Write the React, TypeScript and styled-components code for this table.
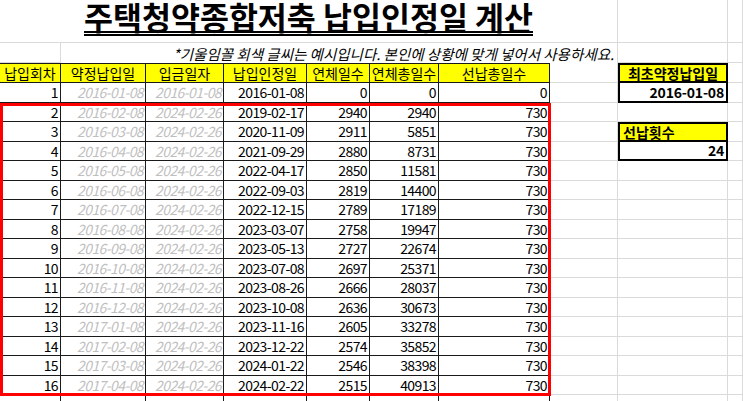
import React from "react";
import styled, { createGlobalStyle } from "styled-components";

const Global = createGlobalStyle`
  html, body { margin: 0; padding: 0; background: #ffffff; overflow: hidden; }
  body { font-family: "Noto Sans CJK KR", "Noto Sans", sans-serif; }
`;

const GRID = "#dadada";
const LINE = "#1a1a1a";

const Sheet = styled.div`
  position: relative;
  display: grid;
  grid-template-columns: 61px 85px 78px 83px 63px 69px 111px 68px 110px 15px;
  grid-template-rows: 43px 20px 20px repeat(17, 19.5px);
  width: 743px;
  height: 401px;
  overflow: hidden;
  font-family: "Noto Sans CJK KR", sans-serif;
  color: #000;
`;

const GridCell = styled.div`
  box-sizing: border-box;
  border-right: 1px solid ${GRID};
  border-bottom: 1px solid ${GRID};
`;

const TitleCell = styled.div`
  grid-column: 1 / span 8;
  box-sizing: border-box;
  border-bottom: 1px solid ${GRID};
  border-right: 1px solid ${GRID};
  display: flex;
  justify-content: center;
  align-items: flex-start;
  padding-top: 2px;
`;

const Title = styled.span`
  display: inline-block;
  font-size: 31.5px;
  font-weight: 700;
  line-height: 29px;
  border-bottom: 5px double #000;
  white-space: nowrap;
`;

const NoteCell = styled.div`
  grid-column: 2 / span 7;
  box-sizing: border-box;
  border-right: 1px solid ${GRID};
  display: flex;
  justify-content: flex-end;
  align-items: center;
  padding-right: 3px;
  font-size: 14.5px;
  font-style: italic;
  white-space: nowrap;
`;

const HeadCell = styled.div`
  box-sizing: border-box;
  background: #ffff00;
  border-top: 1px solid ${LINE};
  border-right: 1px solid ${LINE};
  border-bottom: 1px solid ${LINE};
  display: flex;
  align-items: center;
  justify-content: center;
  font-size: 14px;
  white-space: nowrap;
`;

const DataCell = styled.div<{ $example?: boolean }>`
  box-sizing: border-box;
  border-right: 1px solid ${LINE};
  border-bottom: 1px solid ${LINE};
  display: flex;
  align-items: center;
  justify-content: flex-end;
  padding-right: 2px;
  font-size: 14px;
  letter-spacing: -0.6px;
  white-space: nowrap;
  color: ${(p) => (p.$example ? "#bfbfbf" : "#000")};
  font-style: ${(p) => (p.$example ? "italic" : "normal")};
`;

const BoxHead = styled.div<{ $left?: boolean }>`
  box-sizing: border-box;
  background: #ffff00;
  border: 2px solid #000;
  display: flex;
  align-items: center;
  justify-content: ${(p) => (p.$left ? "flex-start" : "center")};
  padding-left: ${(p) => (p.$left ? "3px" : "0")};
  font-size: 14px;
  font-weight: 700;
  white-space: nowrap;
`;

const BoxValue = styled.div`
  box-sizing: border-box;
  border: 2px solid #000;
  border-top: none;
  display: flex;
  align-items: center;
  justify-content: flex-end;
  padding-right: 2px;
  font-size: 14px;
  letter-spacing: -0.2px;
  font-weight: 700;
  white-space: nowrap;
`;

const RedFrame = styled.div`
  position: absolute;
  left: 0;
  top: 103px;
  width: 551px;
  height: 293px;
  box-sizing: border-box;
  border: 3px solid #ff0000;
  pointer-events: none;
`;

const headers = ["납입회차", "약정납입일", "입금일자", "납입인정일", "연체일수", "연체총일수", "선납총일수"];

const recognized = [
  "2016-01-08", "2019-02-17", "2020-11-09", "2021-09-29", "2022-04-17", "2022-09-03",
  "2022-12-15", "2023-03-07", "2023-05-13", "2023-07-08", "2023-08-26", "2023-10-08",
  "2023-11-16", "2023-12-22", "2024-01-22", "2024-02-22",
];
const overdue = [0, 2940, 2911, 2880, 2850, 2819, 2789, 2758, 2727, 2697, 2666, 2636, 2605, 2574, 2546, 2515];
const overdueTotal = [0, 2940, 5851, 8731, 11581, 14400, 17189, 19947, 22674, 25371, 28037, 30673, 33278, 35852, 38398, 40913];

type Row = { n: number; due: string; paid: string; rec: string; od: number; odt: number; pre: number };

const rows: Row[] = recognized.map((rec, i) => {
  const y = 2016 + Math.floor(i / 12);
  const mo = (i % 12) + 1;
  const due = `${y}-${String(mo).padStart(2, "0")}-08`;
  return {
    n: i + 1,
    due,
    paid: i === 0 ? "2016-01-08" : "2024-02-26",
    rec,
    od: overdue[i],
    odt: overdueTotal[i],
    pre: i === 0 ? 0 : 730,
  };
});

function SideCells({ index }: { index: number }) {
  // index: -1 = header row, 0.. = data rows
  let boxCell: React.ReactNode = <GridCell />;
  if (index === -1) boxCell = <BoxHead>최초약정납입일</BoxHead>;
  else if (index === 0) boxCell = <BoxValue>2016-01-08</BoxValue>;
  else if (index === 2) boxCell = <BoxHead $left>선납횟수</BoxHead>;
  else if (index === 3) boxCell = <BoxValue>24</BoxValue>;
  return (
    <>
      <GridCell />
      {boxCell}
      <GridCell />
    </>
  );
}

export default function App() {
  return (
    <>
      <Global />
      <Sheet>
        <TitleCell>
          <Title>주택청약종합저축 납입인정일 계산</Title>
        </TitleCell>
        <GridCell />
        <GridCell />

        <GridCell />
        <NoteCell>*기울임꼴 회색 글씨는 예시입니다. 본인에 상황에 맞게 넣어서 사용하세요.</NoteCell>
        <GridCell />
        <GridCell />

        {headers.map((h) => (
          <HeadCell key={h}>{h}</HeadCell>
        ))}
        <SideCells index={-1} />

        {rows.map((r, i) => (
          <React.Fragment key={r.n}>
            <DataCell>{r.n}</DataCell>
            <DataCell $example>{r.due}</DataCell>
            <DataCell $example>{r.paid}</DataCell>
            <DataCell>{r.rec}</DataCell>
            <DataCell>{r.od}</DataCell>
            <DataCell>{r.odt}</DataCell>
            <DataCell>{r.pre}</DataCell>
            <SideCells index={i} />
          </React.Fragment>
        ))}

        {Array.from({ length: 7 }).map((_, i) => (
          <DataCell key={`e${i}`} />
        ))}
        <SideCells index={99} />

        <RedFrame />
      </Sheet>
    </>
  );
}
